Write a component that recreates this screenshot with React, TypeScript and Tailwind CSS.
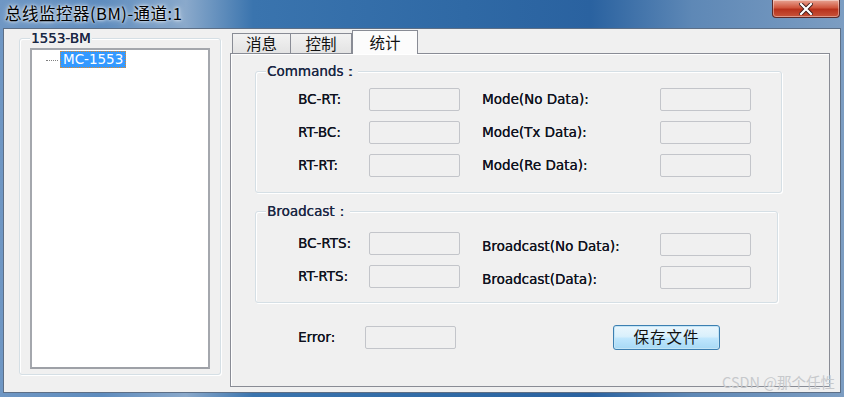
const latin = { fontFamily: '"DejaVu Sans", Verdana, sans-serif' };
const cjk = { fontFamily: '"Noto Sans CJK SC", "Noto Sans", sans-serif' };

const inputCls = "h-[23px] w-[91px] shrink-0 rounded-[2px] border border-[#c3c5ca] bg-[#f0f0f0]";
const labelCls = "text-[13.5px] text-[#0f1220] [text-shadow:0.15px_0_0_#0f1220]";

type Row = { left: string; right: string };

const commandRows: Row[] = [
  { left: "BC-RT:", right: "Mode(No Data):" },
  { left: "RT-BC:", right: "Mode(Tx Data):" },
  { left: "RT-RT:", right: "Mode(Re Data):" },
];

const broadcastRows: Row[] = [
  { left: "BC-RTS:", right: "Broadcast(No Data):" },
  { left: "RT-RTS:", right: "Broadcast(Data):" },
];

function StatRow({ row, shiftRight }: { row: Row; shiftRight?: boolean }) {
  return (
    <div className="flex h-[23px] items-center">
      <span className={`w-[71px] shrink-0 ${labelCls}`} style={latin}>{row.left}</span>
      <div className={inputCls} />
      <span
        className={`ml-[22px] w-[178px] shrink-0 ${labelCls} ${shiftRight ? "translate-y-[3px]" : ""}`}
        style={latin}
      >
        {row.right}
      </span>
      <div className={`${inputCls} ${shiftRight ? "translate-y-[1px]" : ""}`} />
    </div>
  );
}

function GroupBox({ title, className, children }: { title: string; className: string; children: React.ReactNode }) {
  return (
    <div className={`relative rounded-[3px] border border-[#d5dfe5] shadow-[inset_1px_1px_0_#ffffff,1px_1px_0_#ffffff] ${className}`}>
      <span className="absolute left-[10px] top-[-9px] bg-[#f0f0f0] px-[1px] text-[13.5px] leading-[16px] text-[#1a2744] [text-shadow:0.15px_0_0_#1a2744]" style={latin}>
        {title}
      </span>
      {children}
    </div>
  );
}

export default function App() {
  return (
    <div className="relative flex h-[397px] w-[844px] flex-col overflow-hidden bg-[linear-gradient(90deg,#6f97c4_0%,#5e8cbe_12%,#8aa9cb_22%,#3a74ae_30%,#2f69a5_55%,#2a62a0_70%,#5e88b6_82%,#7c9dc2_100%)]">
      {/* Title bar */}
      <div className="flex h-[28px] shrink-0 items-start justify-between">
        <span className="pl-[5px] pt-[2px] text-[16.5px] leading-[22px] tracking-[0.5px] text-black [text-shadow:0_0_6px_#ffffff,0_0_3px_#ffffff]" style={cjk}>
          总线监控器(BM)-通道:1
        </span>
        <div className="mr-[4px] flex h-[18px] w-[68px] items-center justify-center rounded-b-[4px] border border-t-0 border-[#5a2a2a] bg-[linear-gradient(180deg,#e8a493_0%,#d0563d_45%,#b8321c_55%,#c8543a_100%)] shadow-[inset_0_0_0_1px_rgba(255,255,255,0.4)]">
          <svg width="14" height="12" viewBox="0 0 14 12">
            <path d="M2 1 L12 11 M12 1 L2 11" stroke="#3a1a1a" strokeWidth="4" strokeLinecap="square" />
            <path d="M2 1 L12 11 M12 1 L2 11" stroke="#ffffff" strokeWidth="2.2" strokeLinecap="square" />
          </svg>
        </div>
      </div>

      {/* Window body */}
      <div className="mx-[3px] mb-[4px] flex flex-1 border border-[#5d6f86] bg-[#f0f0f0]">
        {/* Left group */}
        <div className="ml-[15px] mt-[9px]">
          <GroupBox title="1553-BM" className="h-[337px] w-[202px]">
            <div className="ml-[10px] mt-[9px] h-[321px] w-[180px] border-2 border-[#a4a7ad] border-b-[#9ea1a7] bg-white">
              <div className="mt-[1px] flex items-center">
                <div className="ml-[14px] mt-[1px] w-[12px] border-t border-dotted border-[#808080]" />
                <span
                  className="ml-[2px] border border-dotted border-[#e08a2c] bg-[#3399ff] px-[2px] text-[13.5px] leading-[15px] text-white"
                  style={latin}
                >
                  MC-1553
                </span>
              </div>
            </div>
          </GroupBox>
        </div>

        {/* Tab control */}
        <div className="ml-[9px] mt-[1px] flex flex-col">
          <div className="flex h-[23px] items-end pl-[2px]">
            <div className="flex h-[20px] w-[59px] items-center justify-center border border-b-0 border-[#898c95] bg-[linear-gradient(180deg,#f2f2f2,#e3e3e3)] text-[15.5px] text-[#111]" style={cjk}>
              消息
            </div>
            <div className="flex h-[20px] w-[61px] items-center justify-center border border-b-0 border-l-0 border-[#898c95] bg-[linear-gradient(180deg,#f2f2f2,#e3e3e3)] text-[15.5px] text-[#111]" style={cjk}>
              控制
            </div>
            <div className="relative z-10 -mb-[1px] flex h-[24px] w-[66px] items-center justify-center border border-b-0 border-[#898c95] bg-[#fcfcfc] text-[15.5px] text-[#111]" style={cjk}>
              统计
            </div>
          </div>
          <div className="flex h-[334px] w-[600px] flex-col border border-[#898c95] bg-[#f0f0f0] pl-[24px] pt-[17px] shadow-[inset_1px_1px_0_#ffffff]">
            <GroupBox title="Commands：" className="h-[122px] w-[527px]">
              <div className="flex flex-col gap-[10px] pl-[42px] pt-[16px]">
                {commandRows.map((r) => (
                  <StatRow key={r.left} row={r} />
                ))}
              </div>
            </GroupBox>
            <GroupBox title="Broadcast：" className="mt-[18px] h-[92px] w-[523px]">
              <div className="flex flex-col gap-[10px] pl-[42px] pt-[20px]">
                {broadcastRows.map((r) => (
                  <StatRow key={r.left} row={r} shiftRight />
                ))}
              </div>
            </GroupBox>
            <div className="mt-[22px] flex h-[24px] items-center">
              <span className={`ml-[43px] w-[67px] shrink-0 ${labelCls}`} style={latin}>Error:</span>
              <div className={inputCls} />
              <button
                className="ml-[157px] flex h-[25px] w-[107px] items-center justify-center rounded-[3px] border border-[#3c7fb1] bg-[linear-gradient(180deg,#eaf6fd_0%,#d9f0fc_45%,#bee6fd_55%,#a7d9f5_100%)] text-[15.5px] tracking-[1px] text-[#111] shadow-[inset_0_0_0_1px_#c4e5f6]"
                style={cjk}
              >
                保存文件
              </button>
            </div>
          </div>
        </div>
      </div>

      {/* Watermark */}
      <span className="absolute bottom-[4px] right-[9px] text-[14.5px] text-[#c7c9cc]" style={cjk}>
        CSDN @那个任性
      </span>
    </div>
  );
}
